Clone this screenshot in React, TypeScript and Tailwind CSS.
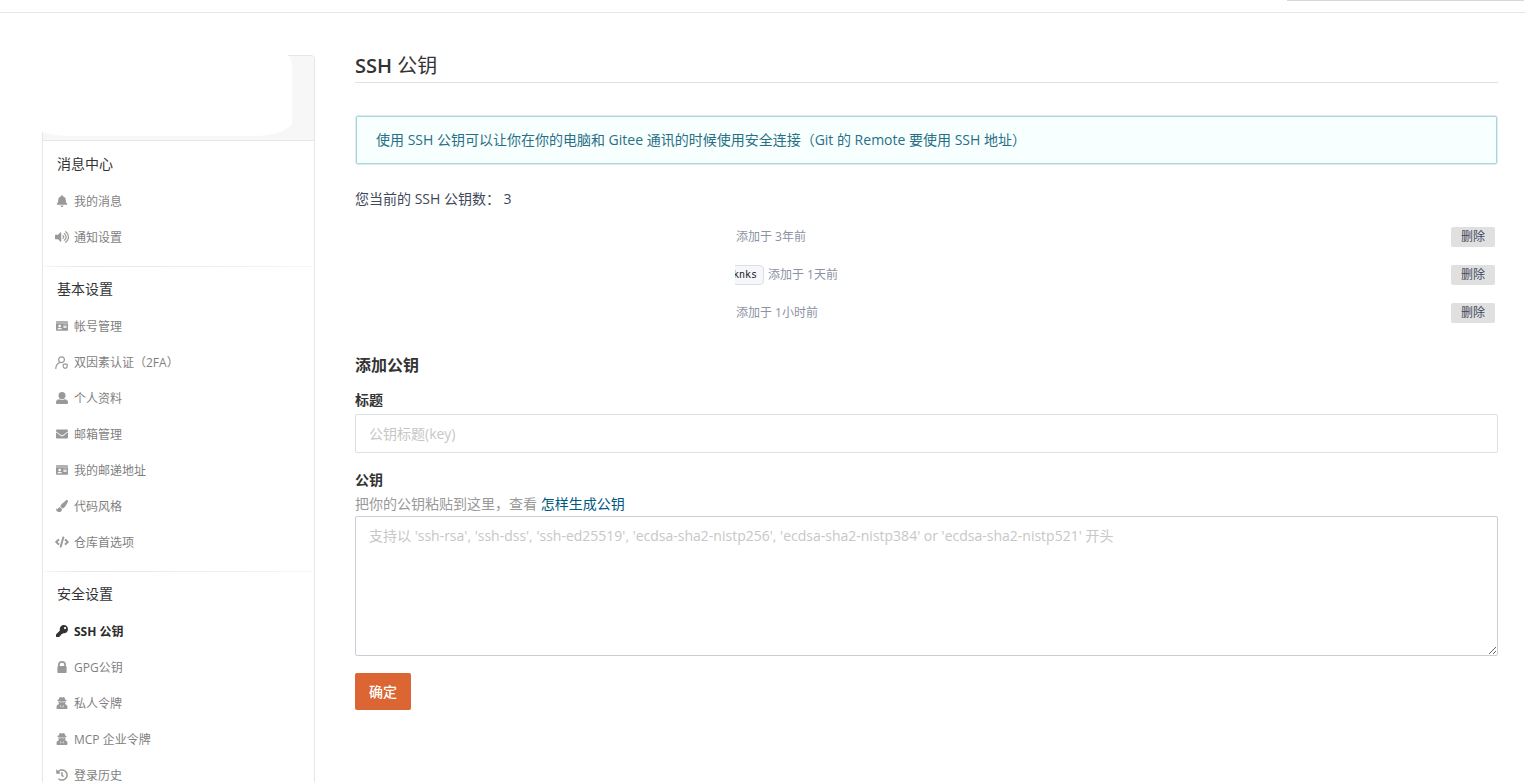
import React from 'react';
import {
    FaBell,
    FaVolumeUp,
    FaIdCard,
    FaEnvelope,
    FaPaintBrush,
    FaCode,
    FaKey,
    FaHistory
} from 'react-icons/fa';

interface MenuItem {
    label: string;
    icon: React.ReactNode;
    active?: boolean;
}

interface MenuSection {
    title: string;
    items: MenuItem[];
}

interface SshKey {
    id: number;
    name?: string;
    added: string;
}

const UserShieldIcon = () => (
    <svg width="13" height="13" viewBox="0 0 13 13" fill="none" stroke="currentColor" strokeWidth="1.2">
        <circle cx="6.5" cy="3.8" r="2.9" />
        <path d="M4.9 6.4C2.4 7.3 1 9.3.8 12.4" strokeLinecap="round" />
        <path d="M8.200 8.500l2-.6 2 .6v2c0 1-.8 1.500-2 1.900-1.200-.4-2-.9-2-1.900z" />
    </svg>
);

const UserIcon = () => (
    <svg width="12" height="12" viewBox="0 0 12 12" fill="currentColor">
        <ellipse cx="6" cy="3.6" rx="3.5" ry="3.6" />
        <path d="M3.3 7.3C4 7.8 5 8.1 6 8.1s2-.3 2.7-.8c2 .3 3.3 1.2 3.3 3v.8c0 .5-.4.9-.9.9H.9c-.5 0-.9-.4-.9-.9v-.8c0-1.8 1.300-2.700 3.300-3z" />
    </svg>
);

const LockIcon = () => (
    <svg width="12" height="12" viewBox="0 0 12 12" fill="currentColor">
        <path
            d="M2 5.2V4a4 4 0 0 1 8 0v1.2c.4.1.6.4.6.8v5.2c0 .5-.3.8-.8.8H2.2c-.5 0-.8-.3-.8-.8V6c0-.4.2-.7.6-.8zm1.700-.1h4.600V4a2.300 2.300 0 0 0-4.600 0z"
            fillRule="evenodd"
        />
    </svg>
);

const SecretIcon = () => (
    <svg width="12" height="12" viewBox="0 0 12 12" fill="currentColor">
        <path d="M3.500.6C3.800 0 4.400 0 4.900.2L6 .6l1.100-.4c.5-.2 1.100-.2 1.400.4l.7 1.900c1 .2 1.600.4 1.600.7 0 .6-2.200 1-4.800 1s-4.800-.4-4.800-1c0-.3.6-.5 1.600-.7z" />
        <path d="M2.300 4.600h7.400c0 1-.3 1.900-.9 2.500 1.700.4 2.700 1.600 2.700 3.300 0 1-.5 1.600-1.300 1.600H1.800C1 12 .5 11.400.5 10.400c0-1.700 1-2.900 2.700-3.300-.6-.6-.9-1.500-.9-2.500z" />
        <path d="M4.100 8.300l1.300.6-.5 1.900zM7.900 8.300l-1.300.6.5 1.900z" fill="#fff" />
        <path d="M3.700 5.400h1.800v.7H3.900zM6.500 5.400h1.800l-.2.7H6.500z" fill="#fff" opacity=".7" />
    </svg>
);

const MENU: MenuSection[] = [
    {
        title: '消息中心',
        items: [
            { label: '我的消息', icon: <FaBell size={12} /> },
            { label: '通知设置', icon: <FaVolumeUp size={14} /> }
        ]
    },
    {
        title: '基本设置',
        items: [
            { label: '帐号管理', icon: <FaIdCard size={12} /> },
            { label: '双因素认证（2FA）', icon: <UserShieldIcon /> },
            { label: '个人资料', icon: <UserIcon /> },
            { label: '邮箱管理', icon: <FaEnvelope size={12} /> },
            { label: '我的邮递地址', icon: <FaIdCard size={12} /> },
            { label: '代码风格', icon: <FaPaintBrush size={12} /> },
            { label: '仓库首选项', icon: <FaCode size={14} /> }
        ]
    },
    {
        title: '安全设置',
        items: [
            { label: 'SSH 公钥', icon: <FaKey size={12} />, active: true },
            { label: 'GPG公钥', icon: <LockIcon /> },
            { label: '私人令牌', icon: <SecretIcon /> },
            { label: 'MCP 企业令牌', icon: <SecretIcon /> },
            { label: '登录历史', icon: <FaHistory size={12} /> }
        ]
    }
];

const KEYS: SshKey[] = [
    { id: 1, added: '添加于 3年前' },
    { id: 2, name: 'knks', added: '添加于 1天前' },
    { id: 3, added: '添加于 1小时前' }
];

const Sidebar = () => (
    <aside className="w-[273px] shrink-0 rounded border border-[#e3e6ea]">
        {/* Profile */}
        <div className="relative mb-px h-[85px] rounded-tr border-b border-[#e3e6ea] bg-[#f7f7f8]">
            <div className="absolute -top-0.5 -left-3 h-[82px] w-[261px] rounded-[0_8px_40px_40px/0_12px_14px_14px] bg-white" />
        </div>

        {MENU.map((section, index) => (
            <nav key={section.title} aria-label={section.title} className="pb-2.5">
                {index > 0 && <div className="mx-0.5 h-px bg-linear-to-r from-[#f4f4f4] via-[#e6e6e6] via-15% to-[#f6f6f6]" />}
                <h2 className="px-3.5 pt-3 pb-2.5 text-sm text-[#333]">{section.title}</h2>
                <ul>
                    {section.items.map(item => (
                        <li key={item.label}>
                            <a
                                href="#"
                                className={`flex h-9 items-center gap-[5px] px-[11px] text-xs ${item.active ? 'font-bold text-[#2b2b2b]' : 'text-[#7f7f7f]'}`}
                            >
                                <span className={`flex w-[15px] justify-center pb-0.5 ${item.active ? 'text-[#333]' : 'text-[#999]'}`}>
                                    {item.icon}
                                </span>
                                {item.label}
                            </a>
                        </li>
                    ))}
                </ul>
            </nav>
        ))}
    </aside>
);

const KeyRow = ({ sshKey }: { sshKey: SshKey }) => (
    <li className="flex h-[38px] items-center pr-[3px] pl-[380px] text-xs text-[#8c92a4]">
        {sshKey.name && (
            <span className="mr-[3px] flex w-[29px] justify-end overflow-hidden">
                <code className="rounded border border-[#dce0e6] bg-[#f6f7fa] px-1.5 font-['DejaVu_Sans_Mono',monospace] text-[10px] leading-[18px] text-[#222]">
                    {sshKey.name}
                </code>
            </span>
        )}
        <span className="px-px">{sshKey.added}</span>
        <button type="button" className="ml-auto h-5 rounded-xs bg-[#e0e0e0] px-2.5 text-[#40485b]">
            删除
        </button>
    </li>
);

const App: React.FC = () => {
    return (
        <div className="h-screen overflow-hidden bg-white font-['Open_Sans','Noto_Sans_CJK_SC',sans-serif] text-sm text-[#40485b]">
            {/* Top bar */}
            <header className="h-[13px] border-b border-[#e3e6ea]">
                <div className="mr-0.5 ml-auto h-px w-[237px] bg-[#d8d8d8]" />
            </header>

            <div className="flex items-start gap-10 pt-[42px] pr-7 pl-[42px]">
                <Sidebar />

                <main className="min-w-0 flex-1">
                    <h1 className="border-b border-[#e0e1e3] pb-[5px] text-xl leading-[22px] text-[#333]">
                        <span className="font-semibold">SSH</span> 公钥
                    </h1>

                    <p className="mx-px mt-[33px] rounded-xs border border-[#a9d5de] bg-[#f8ffff] px-[19px] py-[13px] leading-5 text-[#276f86] shadow-[0_0_0_1px_#dceef2]">
                        使用 SSH 公钥可以让你在你的电脑和 Gitee 通讯的时候使用安全连接（Git 的 Remote 要使用 SSH 地址）
                    </p>

                    <p className="mt-[25px] leading-5">您当前的 SSH 公钥数：&nbsp;3</p>
                    <ul className="mt-[9px]">
                        {KEYS.map(sshKey => (
                            <KeyRow key={sshKey.id} sshKey={sshKey} />
                        ))}
                    </ul>

                    {/* Add key form */}
                    <form onSubmit={e => e.preventDefault()}>
                        <h2 className="mt-[21px] text-base font-bold text-[#333]">添加公钥</h2>
                        <label htmlFor="key-title" className="mt-[13px] block leading-5 font-bold text-[#333]">
                            标题
                        </label>
                        <input
                            id="key-title"
                            type="text"
                            placeholder="公钥标题(key)"
                            className="mt-1 block h-[39px] w-full rounded-xs border border-[#dce0e6] px-[13px] placeholder:text-[#c7c7c7]"
                        />
                        <label htmlFor="key-body" className="mt-[17px] block leading-5 font-bold text-[#333]">
                            公钥
                        </label>
                        <p className="mt-1 leading-5 text-[#999]">
                            把你的公钥粘贴到这里，查看{' '}
                            <a href="#" className="text-[#005980]">怎样生成公钥</a>
                        </p>
                        <textarea
                            id="key-body"
                            placeholder="支持以 'ssh-rsa', 'ssh-dss', 'ssh-ed25519', 'ecdsa-sha2-nistp256', 'ecdsa-sha2-nistp384' or 'ecdsa-sha2-nistp521' 开头"
                            className="mt-0.5 block h-[140px] w-full rounded-xs border border-[#cccdd6] px-[13px] py-[9px] leading-5 placeholder:text-[#c7c7c7]"
                        />
                        <button type="submit" className="mt-[17px] h-[37px] rounded-xs bg-[#dc6633] px-3.5 font-medium text-white">
                            确定
                        </button>
                    </form>
                </main>
            </div>
        </div>
    );
};

export default App;
